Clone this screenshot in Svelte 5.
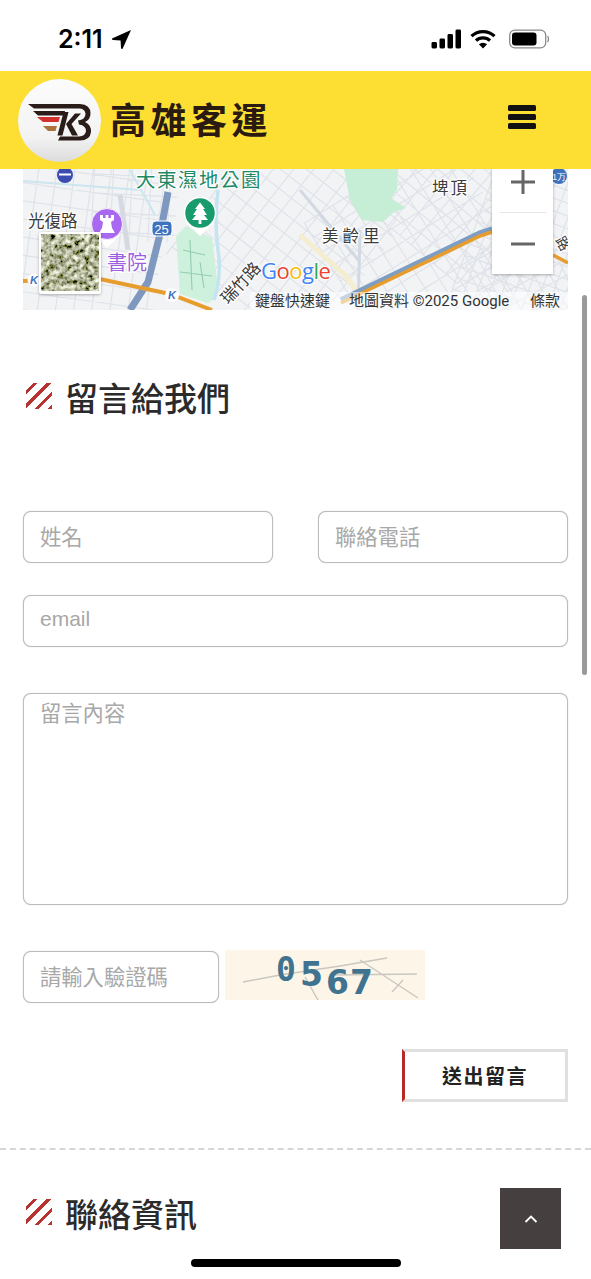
<script>
	// thin street lines for the map, a few rotated grids
	const blocks = [
		{ x: 23, y: 169, w: 110, h: 141, a: 8, step: 18 },
		{ x: 220, y: 169, w: 130, h: 141, a: 38, step: 16 },
		{ x: 350, y: 190, w: 140, h: 120, a: -32, step: 17 },
		{ x: 400, y: 169, w: 100, h: 60, a: 40, step: 15 },
		{ x: 490, y: 260, w: 78, h: 50, a: -28, step: 14 },
		{ x: 100, y: 169, w: 70, h: 60, a: 3, step: 19 },
		{ x: 553, y: 169, w: 15, h: 141, a: 20, step: 12 }
	];

	function buildStreets() {
		const out = [];
		for (const b of blocks) {
			const cx = b.x + b.w / 2;
			const cy = b.y + b.h / 2;
			const r = Math.max(b.w, b.h) * 0.6;
			const rad = (b.a * Math.PI) / 180;
			const c = Math.cos(rad);
			const s = Math.sin(rad);
			for (let d = -r; d <= r; d += b.step) {
				out.push(`M${cx + d * c - r * s} ${cy + d * s + r * c}L${cx + d * c + r * s} ${cy + d * s - r * c}`);
				out.push(`M${cx - r * c - d * s} ${cy - r * s + d * c}L${cx + r * c - d * s} ${cy + r * s + d * c}`);
			}
		}
		return out.join('');
	}

	const streets = buildStreets();
</script>

<div class="page">
	<div class="status">
		<div class="clock">
			<span>2:11</span>
			<svg width="21" height="21" viewBox="0 0 21 21"><path d="M20 1 L1 9.5 Q0.6 10.8 2 11 L9.6 11.4 L10 19 Q10.3 20.4 11.6 19.8 Z" fill="#000" /></svg>
		</div>
		<div class="indicators">
			<svg class="signal" width="31" height="20" viewBox="0 0 31 20">
				<rect x="0.5" y="13" width="5.5" height="6.5" rx="1.4" />
				<rect x="8.5" y="9.5" width="5.5" height="10" rx="1.4" />
				<rect x="16.5" y="5" width="5.5" height="14.5" rx="1.4" />
				<rect x="24.5" y="0.5" width="5.5" height="19" rx="1.4" />
			</svg>
			<svg width="26" height="20" viewBox="0 0 26 20">
				<path d="M1.5 7.2 A16.5 16.5 0 0 1 24.5 7.2" fill="none" stroke="#000" stroke-width="3.2" />
				<path d="M6 11.7 A10 10 0 0 1 20 11.7" fill="none" stroke="#000" stroke-width="3.2" />
				<path d="M13 19.6 L8.9 15.3 A6 6 0 0 1 17.1 15.3 Z" fill="#000" />
			</svg>
			<svg class="battery" width="41" height="20" viewBox="0 0 41 20">
				<rect x="0.7" y="1.2" width="36" height="17.6" rx="5" fill="none" stroke="#8a8a8a" stroke-width="1.3" />
				<rect x="3" y="3.4" width="24.5" height="13.2" rx="3" fill="#000" />
				<path d="M38.6 7 Q40.4 10 38.6 13" fill="none" stroke="#8a8a8a" stroke-width="1.3" />
			</svg>
		</div>
	</div>

	<header class="topbar">
		<div class="brand">
			<div class="logo">
				<svg width="83" height="83" viewBox="18 79 83 83">
					<path d="M28 104 L80 104 Q90.5 104.5 90.5 113.5 Q90.5 119.5 85 122 Q91.5 125 91 132 Q90 140.5 80 140.5 L58 140.5 L60 136.5 L79 136.5 Q85.5 136 86 131 Q86 125.5 79 124.5 L78 120.5 Q85.5 119.5 85.5 114 Q85 108.5 79 108.5 L34 108.5 Z" fill="#2a1c18" />
					<path d="M33 111 L65 111 L64 115.5 L38 115.5 Z" fill="#2a1c18" />
					<path d="M37 117 L60 117 L58.5 122 L43 122 Z" fill="#d32f2c" />
					<path d="M43 126 L57 126 L55.5 131 L48 131 Z" fill="#a8743c" />
					<path d="M63.5 112 L68.5 112 L62.5 135.5 L57.5 135.5 Z" fill="#2a1c18" />
					<path d="M66 124 L75 113.5 L81 113.5 L71.5 124 L78 135.5 L72 135.5 Z" fill="#2a1c18" />
				</svg>
			</div>
			<span class="brand-name">高雄客運</span>
		</div>
		<button class="menu" aria-label="menu">
			<span></span>
			<span></span>
			<span></span>
		</button>
	</header>

	<div class="map">
		<svg width="545" height="141" viewBox="23 169 545 141">
			<defs>
				<filter id="sat" x="0" y="0" width="100%" height="100%">
					<feTurbulence type="fractalNoise" baseFrequency="0.2" numOctaves="3" seed="11" />
					<feColorMatrix values="0.6 0.6 0 0 -0.12  0.6 0.6 0 0 -0.11  0.55 0.55 0 0 -0.13  0 0 0 0 1" />
					<feComponentTransfer>
						<feFuncR type="linear" slope="2" intercept="-0.52" />
						<feFuncG type="linear" slope="2" intercept="-0.52" />
						<feFuncB type="linear" slope="2" intercept="-0.52" />
					</feComponentTransfer>
					<feGaussianBlur stdDeviation="0.5" />
				</filter>
				<filter id="soft" x="-30%" y="-30%" width="160%" height="160%">
					<feDropShadow dx="0" dy="1" stdDeviation="1.5" flood-color="#000" flood-opacity="0.3" />
				</filter>
			</defs>
			<rect x="23" y="169" width="545" height="141" fill="#f2f3f5" />
			<path d={streets} fill="none" stroke="#dfe3e9" stroke-width="1.2" />

			<!-- parks and water -->
			<path d="M344 169 L398 169 L397 190 L391 198 L406 208 L394 212 L383 222 L362 220 L350 200 Z" fill="#c6edd5" />
			<path d="M176 236 L186 226 L212 238 L217 280 L216 298 L208 303 L180 294 Z" fill="#cdf1dc" />
			<path d="M183 250 L205 255 M190 240 L192 290 M180 272 L212 276 M200 262 L204 288" stroke="#93cdb0" stroke-width="1.1" fill="none" />
			<path d="M218 190 Q214 220 218 250 Q222 275 214 300" stroke="#c4e4f2" stroke-width="3.5" fill="none" />
			<path d="M23 181 L140 190 M155 215 L130 170" stroke="#cbe6ef" stroke-width="2" fill="none" />
			<path d="M360 230 L358 310 M300 190 L360 262" stroke="#d2d9e3" stroke-width="3" fill="none" />
			<path d="M300 235 L345 275 L356 290" stroke="#f5edcf" stroke-width="5" fill="none" />
			<path d="M120 195 L128 250" stroke="#d5dae2" stroke-width="5" fill="none" />

			<!-- highways -->
			<path d="M168 192 L161 230 L148 282 L130 310" stroke="#7f98c0" stroke-width="7" fill="none" />
			<path d="M23 281 L100 279 L170 294 L212 310" stroke="#e79d2d" stroke-width="4" fill="none" />
			<path d="M341 300 L480 233 L492 229" stroke="#7e9dc2" stroke-width="5.5" fill="none" />
			<path d="M341 303 L480 236 L492 232" stroke="#e79d2d" stroke-width="3.6" fill="none" />
			<path d="M553 255 L568 263" stroke="#e79d2d" stroke-width="3.6" fill="none" />

			<!-- pins and badges -->
			<circle cx="65" cy="175" r="8" fill="#3b4bb0" />
			<rect x="59" y="173.5" width="12" height="2" fill="#fff" />
			<rect x="152" y="221" width="20" height="15" rx="4" fill="#3f72bd" stroke="#fff" />
			<text class="shield" x="161.5" y="234" text-anchor="middle">25</text>
			<circle cx="172" cy="295" r="7" fill="#fff" />
			<text class="badge" x="172" y="299" text-anchor="middle">K</text>
			<circle cx="34" cy="280" r="6.5" fill="#fff" />
			<text class="badge" x="34" y="284" text-anchor="middle">K</text>
			<circle cx="559" cy="176" r="8" fill="#3f72bd" />
			<text class="shield small" x="559" y="180" text-anchor="middle">1万</text>

			<path d="M93 234 L107 248 L121 234 Z" fill="#fff" />
			<circle cx="107" cy="224" r="15.5" fill="#a868ef" stroke="#f6eefc" stroke-width="1" />
			<path d="M100 215 L103 215 L103 218 L105.6 218 L105.6 215 L108.4 215 L108.4 218 L111 218 L111 215 L114 215 L114 220 L111 222 L112 228 L115 233 L99 233 L102 228 L103 222 L100 220 Z" fill="#fff" />
			<path d="M186 223 L200 236 L214 223 Z" fill="#fff" />
			<circle cx="200" cy="213" r="15.5" fill="#189b6d" stroke="#fff" stroke-width="1.5" />
			<path d="M200 202.5 L205 209 L203 209 L207 215 L204 215 L208 220 L201.4 220 L201.4 224 L198.6 224 L198.6 220 L192 220 L196 215 L193 215 L197 209 L195 209 Z" fill="#fff" />

			<text class="park" x="136" y="187">大東濕地公園</text>
			<text class="label" x="28" y="227">光復路</text>
			<text class="poi" x="107" y="270">書院</text>
			<text class="label sm" x="432" y="194">埤頂</text>
			<text class="label spaced" x="322" y="242">美齡里</text>
			<text class="label rot" transform="translate(228 305) rotate(-47)">瑞竹路</text>
			<text class="label tiny" transform="translate(555 240) rotate(60)">路</text>
			<text class="google" x="261" y="279"><tspan fill="#4285f4">G</tspan><tspan fill="#ea4335">o</tspan><tspan fill="#fbbc05">o</tspan><tspan fill="#4285f4">g</tspan><tspan fill="#34a853">l</tspan><tspan fill="#ea4335">e</tspan></text>

			<!-- layer thumbnail -->
			<g filter="url(#soft)">
				<rect x="39" y="232" width="62" height="62" rx="3" fill="#fff" />
			</g>
			<rect x="41" y="234" width="58" height="57" fill="#8c8c78" filter="url(#sat)" />

			<!-- attribution -->
			<rect x="250" y="292" width="318" height="18" fill="#fff" opacity="0.55" />
			<text class="attr" x="255" y="306">鍵盤快速鍵</text>
			<text class="attr" x="349" y="306">地圖資料 ©2025 Google</text>
			<text class="attr" x="530" y="306">條款</text>

			<!-- zoom control -->
			<g filter="url(#soft)">
				<rect x="492" y="150" width="61" height="124" fill="#fff" />
			</g>
			<path d="M511 182 H535 M523 170 V194 M511 244 H535" stroke="#666" stroke-width="3" fill="none" />
			<path d="M500 212.5 H546" stroke="#e6e6e6" stroke-width="1" fill="none" />
		</svg>
	</div>

	<section class="message">
		<h2 class="heading"><i class="stripes"></i>留言給我們</h2>

		<form class="form" on:submit|preventDefault>
			<div class="two">
				<input type="text" placeholder="姓名" />
				<input type="text" placeholder="聯絡電話" />
			</div>
			<input class="latin" type="text" placeholder="email" />
			<textarea placeholder="留言內容"></textarea>
			<div class="captcha">
				<input type="text" placeholder="請輸入驗證碼" />
				<svg width="200" height="50" viewBox="225 950 200 50">
					<rect x="225" y="950" width="200" height="50" fill="#fdf6e8" />
					<path d="M243 982 L280 975 L340 966 L387 958 M305 977 L318 1000 M360 960 L418 998 M335 975 L417 974 M403 980 L392 992" stroke="#c9c7c0" stroke-width="1.4" fill="none" />
					<text class="code mono" x="276" y="981">0</text>
					<text class="code" x="300" y="986">5</text>
					<text class="code" x="326" y="994">6</text>
					<text class="code" x="350" y="994">7</text>
				</svg>
			</div>
			<div class="actions">
				<button class="send" type="submit">送出留言</button>
			</div>
		</form>
	</section>

	<section class="contact">
		<h2 class="heading"><i class="stripes"></i>聯絡資訊</h2>
	</section>

	<div class="scrollbar"></div>
	<button class="backtop" aria-label="top">
		<svg width="14" height="10" viewBox="0 0 14 10"><path d="M1.5 8 L7 2.5 L12.5 8" fill="none" stroke="#fff" stroke-width="1.8" /></svg>
	</button>
	<div class="home"></div>
</div>

<style>
	:global(body) {
		margin: 0;
		background: #fff;
		overflow: hidden;
	}
	.page {
		position: relative;
		width: 591px;
		height: 1279px;
		overflow: hidden;
		background: #fff;
		font-family: "Noto Sans CJK TC", "Noto Sans", sans-serif;
		color: #2b2b2b;
	}
	.status {
		height: 71px;
		box-sizing: border-box;
		padding: 26px 41px 0 58px;
		display: flex;
		justify-content: space-between;
		align-items: flex-start;
	}
	.clock {
		display: flex;
		align-items: center;
		gap: 8px;
		font-family: Inter, sans-serif;
		font-weight: 600;
		font-size: 25px;
		line-height: 26px;
		color: #000;
	}
	.indicators {
		display: flex;
		align-items: center;
		gap: 10px;
		margin-top: 3px;
	}
	.indicators rect {
		fill: #000;
	}
	.indicators .battery rect:first-child {
		fill: none;
	}
	.signal {
		margin-right: -2px;
	}
	.battery {
		margin-left: 3px;
	}
	.topbar {
		height: 98px;
		background: #fddf33;
		padding: 0 55px 0 18px;
		display: flex;
		align-items: center;
		justify-content: space-between;
	}
	.brand {
		display: flex;
		align-items: center;
		gap: 9px;
	}
	.logo {
		width: 83px;
		height: 83px;
		border-radius: 50%;
		background: linear-gradient(#fcfcfc 0%, #f3f3f3 70%, #dcdcdc 100%);
		overflow: hidden;
	}
	.logo svg {
		display: block;
	}
	.brand-name {
		margin-top: -4px;
		font-size: 36px;
		font-weight: 700;
		letter-spacing: 4.5px;
		line-height: 40px;
		color: #2a1a10;
	}
	.menu {
		width: 28px;
		margin-top: -7px;
		padding: 0;
		border: 0;
		background: none;
		display: flex;
		flex-direction: column;
		gap: 3px;
	}
	.menu span {
		height: 6px;
		border-radius: 1.5px;
		background: #111;
	}
	.map {
		margin: 0 23px;
		height: 141px;
		overflow: hidden;
	}
	.map svg {
		display: block;
	}
	.map text {
		font-family: "Noto Sans CJK TC", sans-serif;
	}
	.map .park {
		font-size: 19.5px;
		letter-spacing: 1.5px;
		fill: #1f8a66;
		stroke: #fff;
		stroke-width: 2.5px;
		paint-order: stroke;
	}
	.map .label {
		font-size: 16.5px;
		fill: #3c3c3c;
		stroke: #fff;
		stroke-width: 2.5px;
		paint-order: stroke;
	}
	.map .sm {
		letter-spacing: 2px;
	}
	.map .spaced {
		letter-spacing: 4px;
	}
	.map .tiny {
		font-size: 14px;
	}
	.map .poi {
		font-size: 20px;
		fill: #9d5fe0;
		stroke: #fff;
		stroke-width: 2.5px;
		paint-order: stroke;
	}
	.map .shield {
		font-family: "Liberation Sans", sans-serif;
		font-size: 13px;
		fill: #fff;
	}
	.map .small {
		font-size: 9px;
	}
	.map .badge {
		font-family: "Liberation Sans", sans-serif;
		font-size: 11px;
		font-style: italic;
		font-weight: 700;
		fill: #3f72bd;
	}
	.map .google {
		font-family: "Open Sans", sans-serif;
		font-size: 22px;
		letter-spacing: -0.5px;
		stroke: #fff;
		stroke-width: 2px;
		paint-order: stroke;
	}
	.map .attr {
		font-family: Roboto, "Noto Sans CJK TC", sans-serif;
		font-size: 15px;
		fill: #333;
	}
	.message {
		padding: 69px 23px 46px;
		border-bottom: 2px dashed #d6d6d6;
	}
	.contact {
		padding: 45px 23px 0;
	}
	.heading {
		margin: 0;
		display: flex;
		align-items: center;
		gap: 13px;
		height: 36px;
		font-size: 33px;
		line-height: 36px;
		font-weight: 500;
		color: #2b2b2b;
	}
	.stripes {
		display: block;
		width: 26px;
		height: 26px;
		margin: -2px 0 0 3px;
		background: repeating-linear-gradient(-45deg, #b8322f 0 3px, #fff 3px 9.5px);
	}
	.form {
		margin-top: 96px;
		display: flex;
		flex-direction: column;
	}
	.two {
		display: grid;
		grid-template-columns: 250px 250px;
		justify-content: space-between;
		margin-bottom: 32px;
	}
	input,
	textarea {
		box-sizing: border-box;
		display: block;
		width: 100%;
		height: 52px;
		padding: 0 16px 4px;
		border: 1px solid #bcbcbc;
		box-shadow: 0 0 1px #b5b5b5;
		border-radius: 8px;
		background: #fff;
		outline: none;
		font-family: "Noto Sans CJK TC", sans-serif;
		font-size: 21.3px;
		color: #333;
	}
	input::placeholder,
	textarea::placeholder {
		color: #a8a8a8;
		opacity: 1;
	}
	.latin {
		font-family: "Liberation Sans", sans-serif;
		font-size: 21px;
		padding-bottom: 5px;
		margin-bottom: 46px;
	}
	textarea {
		height: 212px;
		padding-top: 2px;
		resize: none;
		margin-bottom: 46px;
	}
	.captcha {
		display: flex;
		align-items: flex-start;
		gap: 6px;
		margin-bottom: 46px;
	}
	.captcha input {
		width: 196px;
	}
	.captcha svg {
		display: block;
		margin-top: -1px;
	}
	.code {
		font-family: "DejaVu Sans", sans-serif;
		font-weight: 700;
		font-size: 33px;
		fill: #3f7390;
	}
	.mono {
		font-family: "DejaVu Sans Mono", monospace;
	}
	.actions {
		display: flex;
		justify-content: flex-end;
	}
	.send {
		box-sizing: border-box;
		width: 166px;
		height: 53px;
		padding: 0;
		background: #fff;
		border: 3px solid #e0e0e0;
		border-left: 3px solid #b82a28;
		font-family: "Noto Sans CJK TC", sans-serif;
		font-size: 20px;
		font-weight: 700;
		letter-spacing: 1.5px;
		color: #222;
	}
	.scrollbar {
		position: absolute;
		left: 582px;
		top: 295px;
		width: 5px;
		height: 380px;
		border-radius: 3px;
		background: #9a9a9a;
	}
	.backtop {
		position: absolute;
		left: 500px;
		top: 1188px;
		width: 61px;
		height: 61px;
		padding: 0;
		border: 0;
		background: #463f3f;
		display: flex;
		align-items: center;
		justify-content: center;
	}
	.home {
		position: absolute;
		left: 191px;
		top: 1259px;
		width: 210px;
		height: 8px;
		border-radius: 4px;
		background: #000;
	}
</style>
